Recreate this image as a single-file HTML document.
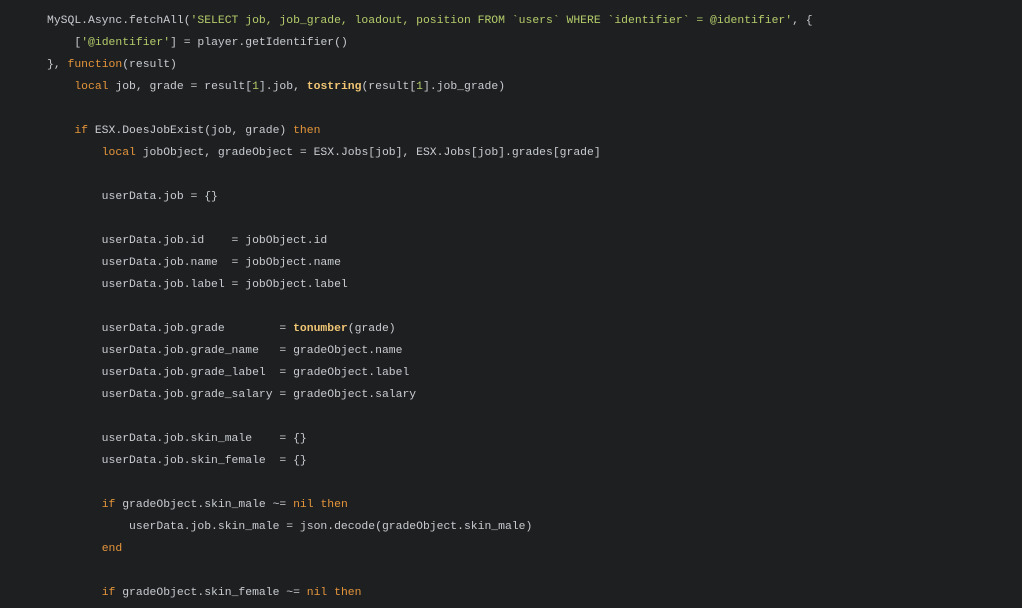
<!DOCTYPE html><html><head><style>
body{margin:0;background:#1d1f21;width:1022px;height:608px;overflow:hidden}
pre{margin:0;padding:10px 0 0 47px;font-family:"Liberation Mono",monospace;font-size:11.4px;line-height:22px;color:#c9ccd0}
.k{color:#e5953a}.s{color:#b5cc6a}.b{color:#f0c674;font-weight:bold}.n{color:#b5cc6a}
</style></head><body><pre>MySQL.Async.fetchAll(<span class="s">'SELECT job, job_grade, loadout, position FROM `users` WHERE `identifier` = @identifier'</span>, {
    [<span class="s">'@identifier'</span>] = player.getIdentifier()
}, <span class="k">function</span>(result)
    <span class="k">local</span> job, grade = result[<span class="n">1</span>].job, <span class="b">tostring</span>(result[<span class="n">1</span>].job_grade)

    <span class="k">if</span> ESX.DoesJobExist(job, grade) <span class="k">then</span>
        <span class="k">local</span> jobObject, gradeObject = ESX.Jobs[job], ESX.Jobs[job].grades[grade]

        userData.job = {}

        userData.job.id    = jobObject.id
        userData.job.name  = jobObject.name
        userData.job.label = jobObject.label

        userData.job.grade        = <span class="b">tonumber</span>(grade)
        userData.job.grade_name   = gradeObject.name
        userData.job.grade_label  = gradeObject.label
        userData.job.grade_salary = gradeObject.salary

        userData.job.skin_male    = {}
        userData.job.skin_female  = {}

        <span class="k">if</span> gradeObject.skin_male ~= <span class="k">nil</span> <span class="k">then</span>
            userData.job.skin_male = json.decode(gradeObject.skin_male)
        <span class="k">end</span>

        <span class="k">if</span> gradeObject.skin_female ~= <span class="k">nil</span> <span class="k">then</span>
</pre></body></html>
